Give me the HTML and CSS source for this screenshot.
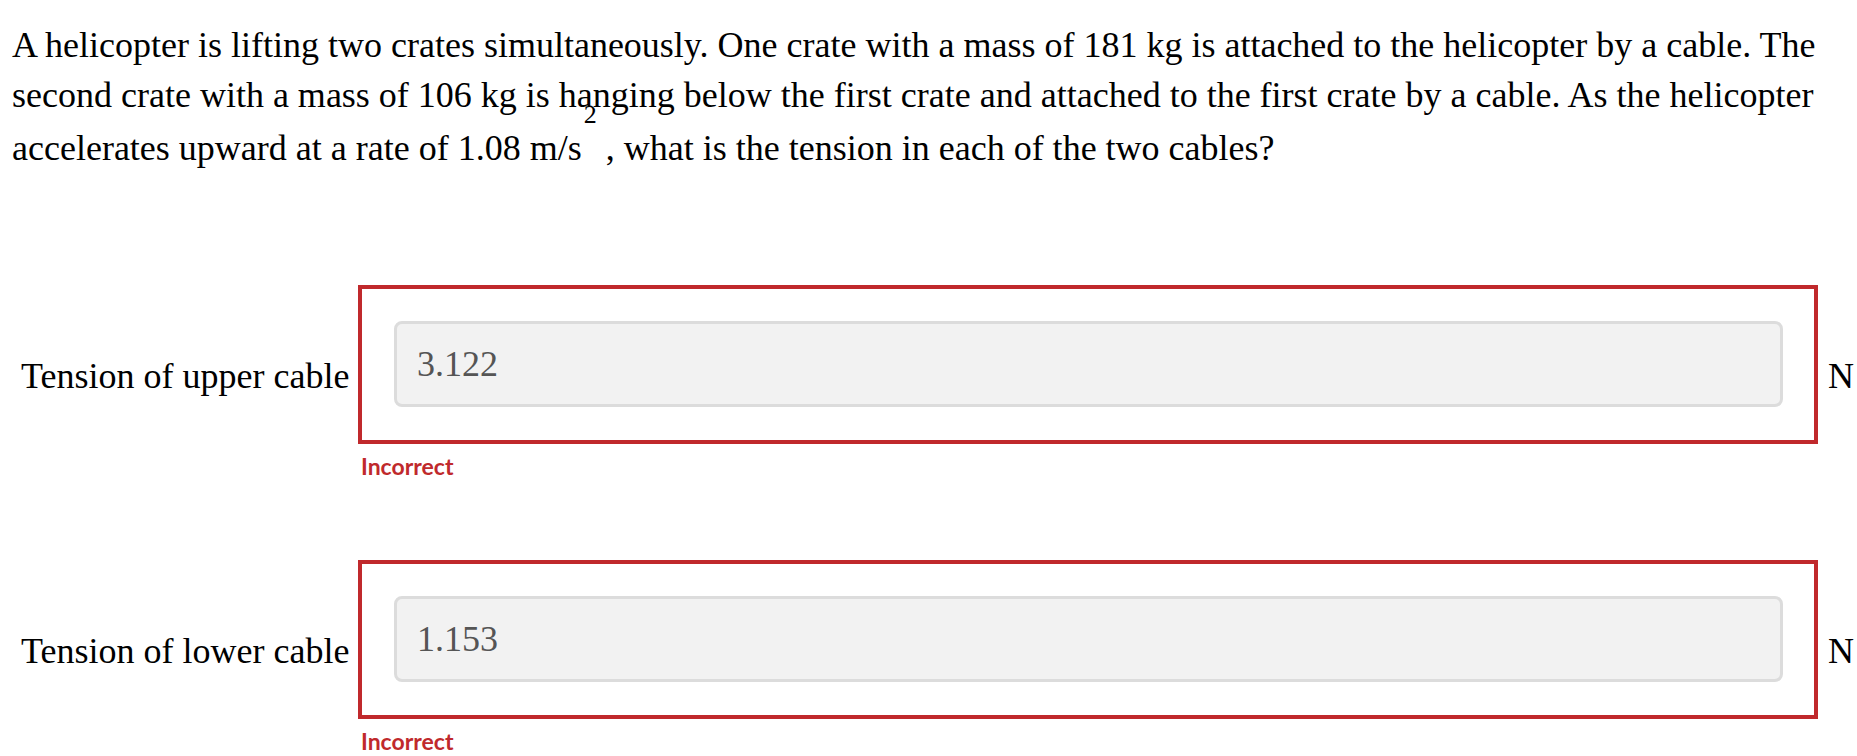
FILE: index.html
```html
<!DOCTYPE html>
<html lang="en">

<head>
    <meta charset="UTF-8" />
    <meta name="viewport" content="width=device-width, initial-scale=1.0" />
    <title>Helicopter crates</title>
    <link rel="stylesheet" href="styles.css">
</head>

<body>

    <!-- Enoncé -->
    <p class="question">
        A helicopter is lifting two crates simultaneously. One crate with a mass of 181 kg is attached to the helicopter by a cable. The second crate with a mass of 106 kg is hanging below the first crate and attached to the first crate by a cable. As the helicopter accelerates upward at a rate of 1.08 m/s<span class="exp">2</span> , what is the tension in each of the two cables?
    </p>

    <!-- Réponse 1 -->
    <div class="answer first">
        <label class="answer-label" for="upper">Tension of upper cable</label>
        <div class="answer-box wrong">
            <input type="text" id="upper" class="answer-input" value="3.122" readonly />
        </div>
        <span class="unit">N</span>
    </div>
    <div class="feedback">Incorrect</div>

    <!-- Réponse 2 -->
    <div class="answer">
        <label class="answer-label" for="lower">Tension of lower cable</label>
        <div class="answer-box wrong">
            <input type="text" id="lower" class="answer-input" value="1.153" readonly />
        </div>
        <span class="unit">N</span>
    </div>
    <div class="feedback">Incorrect</div>

</body>

</html>
```

FILE: styles.css
```css
body {
    font-family: "Liberation Serif", "Times New Roman", serif;
    font-size: 36px;
    line-height: 1.2;
    color: #000;
    background: #fff;
    margin: 0;
    padding: 20px 12px 0 12px;
}

.question {
    margin: 0;
    line-height: 50px;
}

/* le petit 2 de m/s², remonté au-dessus de la ligne */
.exp {
    font-size: 26px;
    vertical-align: 32px;
    line-height: 0;
    position: relative;
    top: -5px;
    margin-left: 2px;
}

.answer {
    display: flex;
    align-items: center;
    padding-left: 9px;
    margin-top: 79px;
}

.answer.first {
    margin-top: 112px;
}

.answer-label,
.unit {
    margin-top: 25px;
}

.answer-label {
    flex: 0 0 337px;
}

.answer-box {
    flex: 0 0 1460px;
    box-sizing: border-box;
    padding: 32px 31px 33px 32px;
    border: 4px solid transparent;
}

.answer-box.wrong {
    border-color: #c0292c;
}

.answer-input {
    display: block;
    width: 100%;
    box-sizing: border-box;
    height: 86px;
    margin: 0;
    padding: 0 20px;
    font-family: "Liberation Serif", "Times New Roman", serif;
    font-size: 36px;
    color: #555;
    background: #f2f2f2;
    border: 3px solid #dcdcdc;
    border-radius: 8px;
    outline: none;
}

.unit {
    margin-left: 10px;
}

.feedback {
    font-family: Lato, "Liberation Sans", sans-serif;
    font-weight: 700;
    font-size: 23px;
    color: #c0292c;
    margin: 9px 0 0 349px;
}
```
